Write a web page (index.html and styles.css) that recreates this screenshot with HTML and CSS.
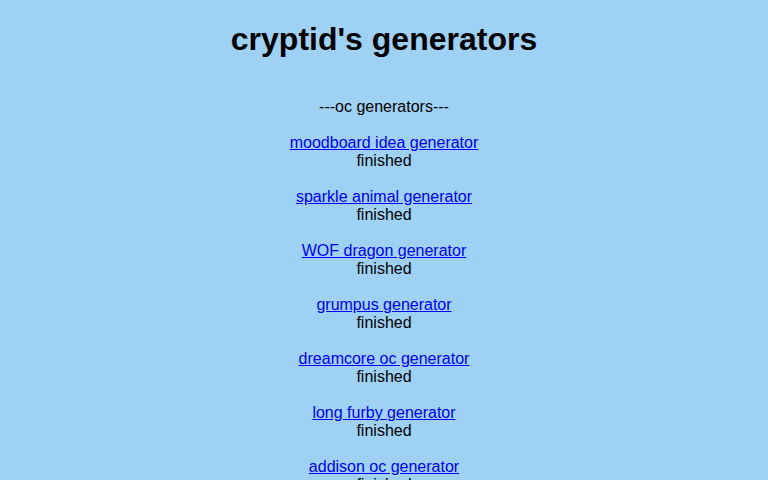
FILE: index.html
```html
<!DOCTYPE html>
<html lang="en">
<head>
<meta charset="utf-8">
<title>cryptid's generators</title>
<link rel="stylesheet" href="styles.css">
</head>
<body>
<main class="page">
  <h1 class="title">cryptid's generators</h1>
  <section class="list">
    <p class="heading">---oc generators---</p>
    <p class="entry"><a href="#">moodboard idea generator</a><br>finished</p>
    <p class="entry"><a href="#">sparkle animal generator</a><br>finished</p>
    <p class="entry"><a href="#">WOF dragon generator</a><br>finished</p>
    <p class="entry"><a href="#">grumpus generator</a><br>finished</p>
    <p class="entry"><a href="#">dreamcore oc generator</a><br>finished</p>
    <p class="entry"><a href="#">long furby generator</a><br>finished</p>
    <p class="entry"><a href="#">addison oc generator</a><br>finished</p>
  </section>
</main>
</body>
</html>
```
FILE: styles.css
```css
html, body {
  margin: 0;
  padding: 0;
}

body {
  background: #9fd1f4;
  color: #000;
  font-family: "Liberation Sans", Arial, sans-serif;
  font-size: 16px;
  text-align: center;
}

.page {
  padding-top: 21px;
}

.title {
  margin: 0;
  font-size: 32px;
  line-height: 37px;
  font-weight: bold;
}

.list {
  margin-top: 40px;
}

.heading,
.entry {
  margin: 0 0 18px;
  line-height: 18px;
}

.entry a {
  color: #0000ee;
  text-decoration: underline;
}
```
